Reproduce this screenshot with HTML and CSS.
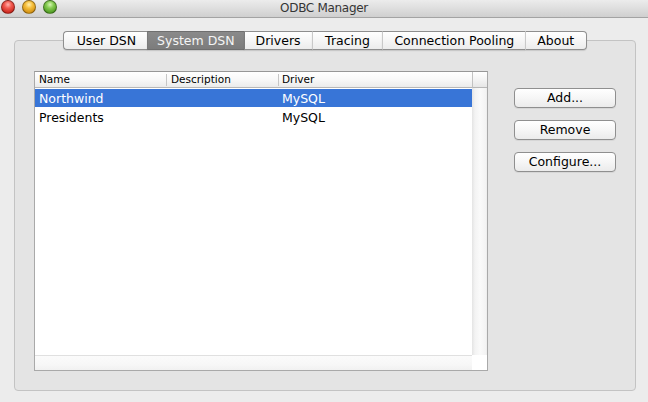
FILE: index.html
```html
<!DOCTYPE html>
<html>
<head>
<meta charset="utf-8">
<title>ODBC Manager</title>
<link rel="stylesheet" href="styles.css">
</head>
<body>
<div class="window">
  <div class="titlebar">
    <div class="lights">
      <span class="light red"></span>
      <span class="light yellow"></span>
      <span class="light green"></span>
    </div>
    <div class="title">ODBC Manager</div>
  </div>
  <div class="tabs">
    <div class="tab">User DSN</div>
    <div class="tab selected">System DSN</div>
    <div class="tab">Drivers</div>
    <div class="tab tab-wide">Tracing</div>
    <div class="tab">Connection Pooling</div>
    <div class="tab">About</div>
  </div>
  <div class="groupbox">
    <div class="table">
      <div class="thead">
        <div class="th c-name">Name</div>
        <div class="th c-desc">Description</div>
        <div class="th c-driver">Driver</div>
      </div>
      <div class="thead-corner"></div>
      <div class="tbody">
        <div class="row selected">
          <div class="td c-name">Northwind</div>
          <div class="td c-desc"></div>
          <div class="td c-driver">MySQL</div>
        </div>
        <div class="row">
          <div class="td c-name">Presidents</div>
          <div class="td c-desc"></div>
          <div class="td c-driver">MySQL</div>
        </div>
      </div>
      <div class="vscroll"></div>
      <div class="hscroll"></div>
      <div class="scroll-corner"></div>
    </div>
    <div class="buttons">
      <button class="btn">Add...</button>
      <button class="btn">Remove</button>
      <button class="btn">Configure...</button>
    </div>
  </div>
</div>
</body>
</html>
```
FILE: styles.css
```css
html, body {
  margin: 0;
  padding: 0;
}
body {
  background: #ececec;
  font-family: "DejaVu Sans", "Liberation Sans", sans-serif;
  width: 648px;
  height: 402px;
  overflow: hidden;
}
.window {
  width: 648px;
  height: 402px;
  background: #ececec;
}
.titlebar {
  height: 17px;
  border-bottom: 1px solid #a3a3a3;
  background: linear-gradient(to bottom, #ececec 0%, #dedede 50%, #cfcfcf 100%);
  display: flex;
  align-items: center;
  position: relative;
}
.lights {
  display: flex;
  gap: 7px;
  padding-left: 1px;
  margin-top: -4px;
}
.light {
  width: 12px;
  height: 12px;
  border-radius: 50%;
  border: 1px solid rgba(0,0,0,0.35);
  box-sizing: content-box;
  display: block;
}
.light.red {
  background: radial-gradient(circle at 50% 30%, #ffb3ad 0%, #f25a50 35%, #c9261c 80%, #a51a12 100%);
}
.light.yellow {
  background: radial-gradient(circle at 50% 30%, #fff0b0 0%, #f6bf3c 35%, #d18f12 80%, #b0730c 100%);
}
.light.green {
  background: radial-gradient(circle at 50% 30%, #d8f5b5 0%, #86cc52 35%, #4f9a22 80%, #3d7e18 100%);
}
.title {
  position: absolute;
  left: 0;
  right: 0;
  top: 0;
  text-align: center;
  font-size: 12px;
  line-height: 17px;
  color: #353535;
  letter-spacing: -0.3px;
}
.tabs {
  position: relative;
  z-index: 2;
  display: flex;
  justify-content: center;
  margin-top: 13px;
  margin-left: 2px;
}
.tab {
  height: 17px;
  line-height: 17px;
  font-size: 12.5px;
  padding: 0 11px;
  color: #000;
  background: linear-gradient(to bottom, #ffffff 0%, #f6f6f6 50%, #ececec 100%);
  border-top: 1px solid #8e8e8e;
  border-bottom: 1px solid #8e8e8e;
  border-left: 1px solid #c9c9c9;
  box-shadow: 0 1px 1px rgba(0,0,0,0.12);
}
.tab:first-child {
  border-left: 1px solid #8e8e8e;
  border-radius: 4px 0 0 4px;
  padding-left: 13px;
}
.tab:last-child {
  border-right: 1px solid #8e8e8e;
  border-radius: 0 4px 4px 0;
  padding-right: 12px;
}
.tab.selected {
  padding: 0 9px;
  background: linear-gradient(to bottom, #8a8a8a 0%, #7c7c7c 100%);
  color: #f4f4f4;
  border-left-color: #7a7a7a;
  border-top-color: #6e6e6e;
  border-bottom-color: #6e6e6e;
}
.tab.selected + .tab {
  border-left-color: #7a7a7a;
}
.tab.tab-wide {
  padding: 0 12.5px;
}
.groupbox {
  position: relative;
  z-index: 1;
  margin-top: -10px;
  margin-left: 14px;
  width: 601px;
  height: 319px;
  border: 1px solid #c3c3c3;
  border-radius: 4px;
  background: #e4e4e4;
  padding: 30px 0 0 19px;
  box-sizing: content-box;
  display: flex;
  gap: 26px;
  align-items: flex-start;
}
.table {
  width: 452px;
  height: 298px;
  border: 1px solid #a9a9a9;
  border-top-color: #979797;
  background: #fff;
  display: grid;
  grid-template-columns: 1fr 15px;
  grid-template-rows: 16px 1fr 15px;
}
.thead {
  display: flex;
  background: linear-gradient(to bottom, #ffffff 0%, #f8f8f8 50%, #ebebeb 100%);
  border-bottom: 1px solid #b7b7b7;
  box-sizing: border-box;
}
.thead-corner {
  background: linear-gradient(to bottom, #ffffff 0%, #f4f4f4 50%, #e6e6e6 100%);
  border-left: 1px solid #c2c2c2;
  border-bottom: 1px solid #b7b7b7;
  box-sizing: border-box;
}
.th {
  font-size: 10.5px;
  line-height: 15px;
  color: #000;
  box-sizing: border-box;
  padding-left: 4px;
  position: relative;
}
.th + .th::before {
  content: "";
  position: absolute;
  left: 0;
  top: 2px;
  bottom: 1px;
  width: 1px;
  background: #c6c6c6;
}
.c-name { width: 131px; }
.c-desc { width: 112px; }
.c-driver { flex: 1; }
.th.c-desc { padding-left: 5px; }
.tbody {
  padding-top: 1px;
  overflow: hidden;
  display: flex;
  flex-direction: column;
  gap: 1px;
}
.row {
  display: flex;
  height: 18px;
}
.td {
  font-size: 12.5px;
  line-height: 17px;
  padding-top: 1px;
  color: #000;
  padding-left: 4px;
  box-sizing: border-box;
  white-space: nowrap;
}
.row.selected {
  background: #3875d7;
}
.row.selected .td {
  color: #fff;
}
.vscroll {
  grid-row: 2;
  grid-column: 2;
  background: linear-gradient(to right, #e4e4e4 0px, #f3f3f3 3px, #fafafa 8px, #f3f3f3 14px, #e9e9e9 15px);
}
.hscroll {
  grid-row: 3;
  grid-column: 1;
  border-top: 1px solid #e0e0e0;
  background: linear-gradient(to bottom, #fbfbfb 0%, #f7f7f7 60%, #f1f1f1 100%);
  box-sizing: border-box;
}
.scroll-corner {
  grid-row: 3;
  grid-column: 2;
  background: #fff;
}
.buttons {
  margin-top: 17px;
  display: flex;
  flex-direction: column;
  gap: 12px;
}
.btn {
  width: 102px;
  height: 20px;
  box-sizing: border-box;
  border: 1px solid #8f8f8f;
  border-radius: 4px;
  background: linear-gradient(to bottom, #ffffff 0%, #f6f6f6 50%, #ebebeb 100%);
  box-shadow: 0 1px 0 rgba(0,0,0,0.06);
  font-family: "DejaVu Sans", "Liberation Sans", sans-serif;
  font-size: 12.5px;
  line-height: 18px;
  color: #000;
  padding: 0;
  margin: 0;
}
```
